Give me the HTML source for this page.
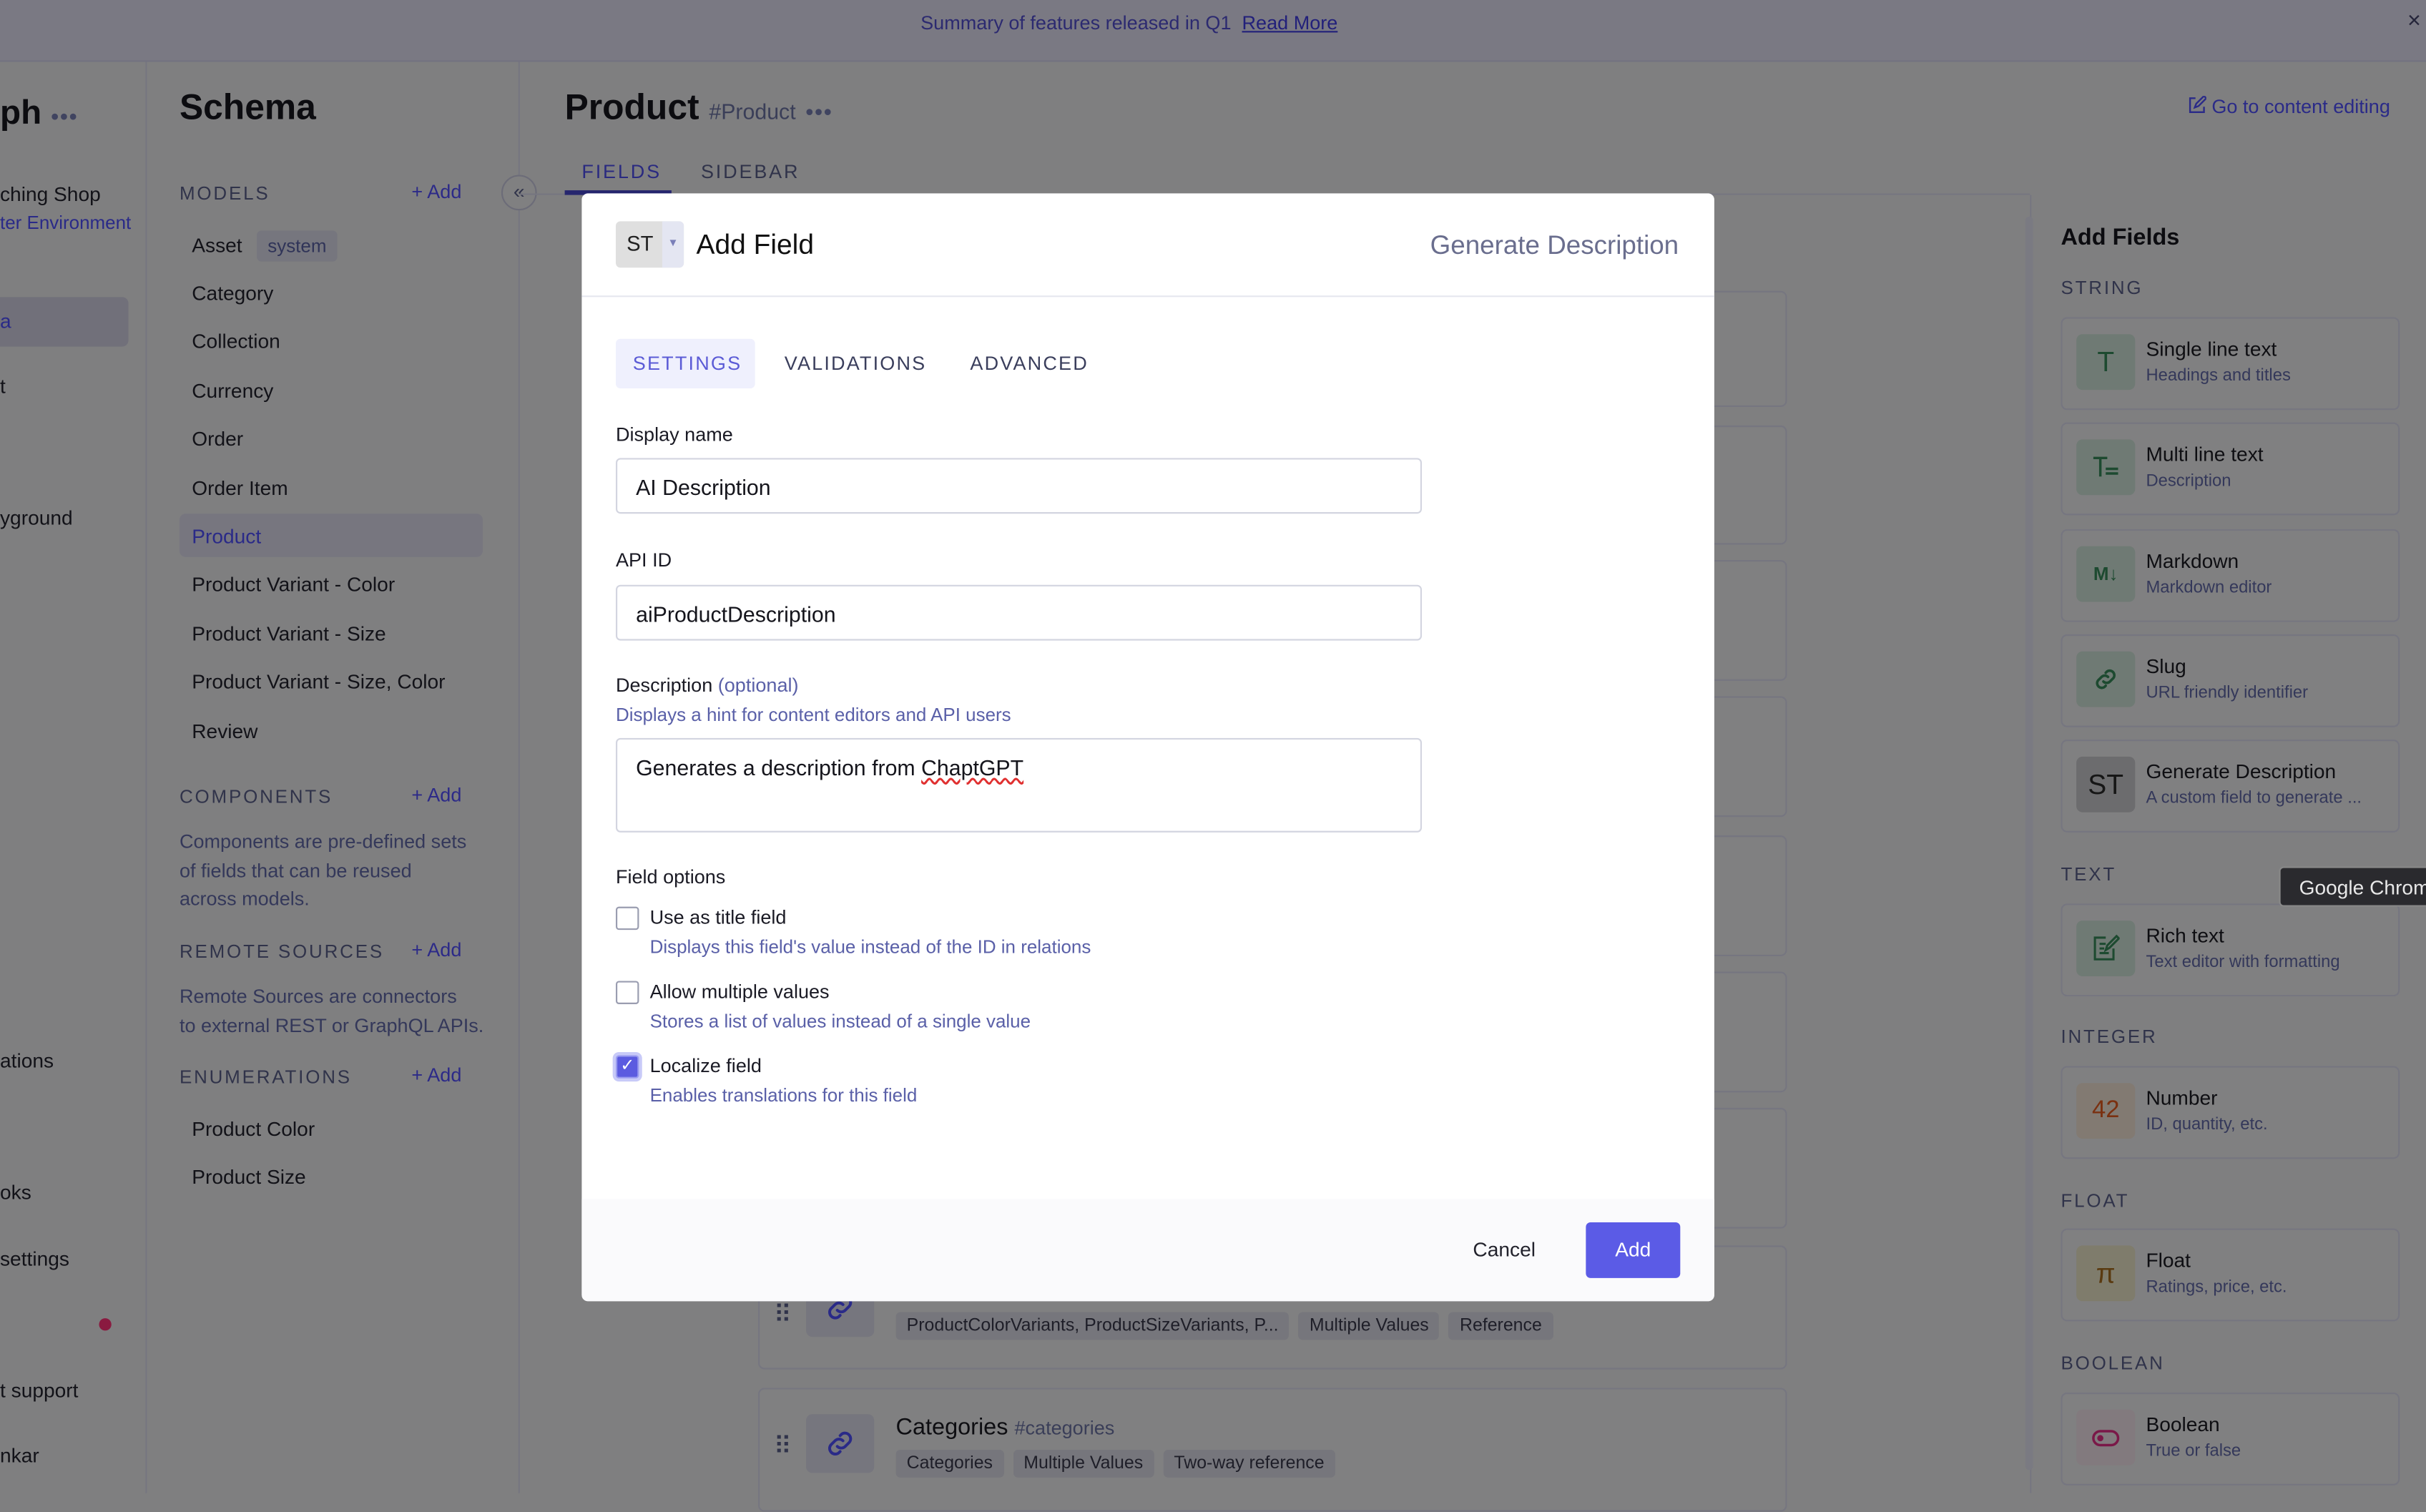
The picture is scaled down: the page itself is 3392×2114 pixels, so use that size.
<!DOCTYPE html>
<html><head><meta charset="utf-8"><style>
*{box-sizing:border-box;margin:0;padding:0}
html,body{width:3392px;height:2088px;overflow:hidden;background:#7f7f80}
#r{position:absolute;left:0;top:0;width:1568px;height:965px;transform:scale(2.16327);transform-origin:0 0;font-family:"Liberation Sans",sans-serif;color:#111;background:#7f7f80}
.a{position:absolute;white-space:nowrap}
.cap{font-size:12px;letter-spacing:1.3px;color:#30334a}
.addl{color:#2c2a88;font-size:12.5px}
.it{font-size:13px;color:#121218}
.card{position:absolute;left:1332px;width:219px;height:60px;border:1px solid #767680;border-radius:4px;background:#808081}
.ic{position:absolute;left:9px;top:10px;width:38px;height:36px;border-radius:4px;background:#6f7a74;color:#1d4a30;font-size:18px;text-align:center;line-height:36px}
.ic svg{position:absolute;left:10px;top:9px}
.ct{position:absolute;left:54px;top:12px;font-size:13px;color:#0e0e12}
.cs{position:absolute;left:54px;top:31px;font-size:11px;color:#34385a}
.bgc{position:absolute;left:490px;width:665px;border:1px solid #767680;border-radius:4px;background:#808081}
.chip{display:inline-block;background:#76767c;border-radius:3px;padding:3px 7px;font-size:11.5px;color:#1e1e28;margin-right:6px}
.lbl{font-size:12.5px;color:#1a1a24}
.inp{position:absolute;left:398px;width:521px;height:36px;border:1px solid #d3d5e0;border-radius:3px;font-size:14px;padding:10px 12px;color:#15151c}
.hint{font-size:12px;color:#5a60a8}
.cb{position:absolute;left:398px;width:15px;height:15px;border:1.5px solid #9a9db0;border-radius:2px;background:#fff}
</style></head><body><div id="r">
<div class="a" style="left:0;top:0;width:1568px;height:40px;background:#7a7983;border-bottom:1px solid #737280"></div>
<div class="a" style="left:595px;top:8px;font-size:12.5px;color:#2c2a70">Summary of features released in Q1 &nbsp;<span style="text-decoration:underline;color:#22207a">Read More</span></div>
<div class="a" style="left:1556px;top:5px;font-size:15px;color:#25253a">×</div>
<div class="a" style="left:94px;top:40px;width:1px;height:925px;background:#767680"></div>
<div class="a" style="left:0;top:60px;font-size:22px;font-weight:bold;color:#0c0c10">ph <span style="font-size:14px;color:#404460;letter-spacing:1px">•••</span></div>
<div class="a it" style="left:0;top:118px">ching Shop</div>
<div class="a" style="left:0;top:137px;font-size:12px;color:#2a2a88">ter Environment</div>
<div class="a" style="left:0;top:192px;width:83px;height:32px;background:#71707a;border-radius:0 4px 4px 0"></div>
<div class="a" style="left:0;top:200px;font-size:13px;color:#2a2a88">a</div>
<div class="a it" style="left:0;top:242px">t</div>
<div class="a it" style="left:0;top:327px">yground</div>
<div class="a it" style="left:0;top:678px">ations</div>
<div class="a it" style="left:0;top:763px">oks</div>
<div class="a it" style="left:0;top:806px">settings</div>
<div class="a" style="left:64px;top:852px;width:8px;height:8px;border-radius:50%;background:#8a1a40"></div>
<div class="a it" style="left:0;top:891px">t support</div>
<div class="a it" style="left:0;top:933px">nkar</div>
<div class="a" style="left:335px;top:40px;width:1px;height:925px;background:#767680"></div>
<div class="a" style="left:116px;top:56px;font-size:23px;font-weight:bold;color:#0c0c10">Schema</div>
<div class="a cap" style="left:116px;top:118px">MODELS</div>
<div class="a addl" style="left:266px;top:117px">+ Add</div>
<div class="a" style="left:324px;top:113px;width:23px;height:23px;border:1px solid #6c6c78;border-radius:50%;background:#808081;text-align:center;line-height:20px;font-size:13px;color:#30334a">«</div>
<div class="a it" style="left:124px;top:151px">Asset</div>
<div class="a" style="left:166px;top:149px;background:#76767e;border-radius:3px;padding:3px 7px;font-size:12px;color:#303458">system</div>
<div class="a it" style="left:124px;top:182px">Category</div>
<div class="a it" style="left:124px;top:213px">Collection</div>
<div class="a it" style="left:124px;top:245px">Currency</div>
<div class="a it" style="left:124px;top:276px">Order</div>
<div class="a it" style="left:124px;top:308px">Order Item</div>
<div class="a" style="left:116px;top:332px;width:196px;height:28px;background:#77767f;border-radius:4px"></div>
<div class="a" style="left:124px;top:339px;font-size:13px;color:#2a2a88">Product</div>
<div class="a it" style="left:124px;top:370px">Product Variant - Color</div>
<div class="a it" style="left:124px;top:402px">Product Variant - Size</div>
<div class="a it" style="left:124px;top:433px">Product Variant - Size, Color</div>
<div class="a it" style="left:124px;top:465px">Review</div>
<div class="a cap" style="left:116px;top:508px">COMPONENTS</div>
<div class="a addl" style="left:266px;top:507px">+ Add</div>
<div class="a" style="left:116px;top:535px;font-size:12.5px;line-height:18.5px;color:#34385a">Components are pre-defined sets<br>of fields that can be reused<br>across models.</div>
<div class="a cap" style="left:116px;top:608px">REMOTE SOURCES</div>
<div class="a addl" style="left:266px;top:607px">+ Add</div>
<div class="a" style="left:116px;top:635px;font-size:12.5px;line-height:18.5px;color:#34385a">Remote Sources are connectors<br>to external REST or GraphQL APIs.</div>
<div class="a cap" style="left:116px;top:689px">ENUMERATIONS</div>
<div class="a addl" style="left:266px;top:688px">+ Add</div>
<div class="a it" style="left:124px;top:722px">Product Color</div>
<div class="a it" style="left:124px;top:753px">Product Size</div>
<div class="a" style="left:365px;top:56px;font-size:23px;font-weight:bold;color:#0c0c10">Product <span style="font-size:14px;font-weight:normal;color:#3a3e58">#Product</span> <span style="font-size:14px;color:#404460;letter-spacing:1px">•••</span></div>
<div class="a" style="left:1414px;top:62px;font-size:12.5px;color:#2a2a88"><svg width="12" height="12" viewBox="0 0 12 12" style="vertical-align:-1px"><path d="M5 1.5H1.5v9h9V7M4.5 7.5l1-2.5 5-5 1.5 1.5-5 5z" fill="none" stroke="#2a2a88" stroke-width="1.1"/></svg> Go to content editing</div>
<div class="a" style="left:376px;top:104px;font-size:12.5px;letter-spacing:1.3px;color:#2a2a80">FIELDS</div>
<div class="a" style="left:453px;top:104px;font-size:12.5px;letter-spacing:1.3px;color:#30334a">SIDEBAR</div>
<div class="a" style="left:336px;top:125px;width:976px;height:1px;background:#767680"></div>
<div class="a" style="left:365px;top:123px;width:69px;height:3px;background:#26266e"></div>
<div class="bgc" style="top:188px;height:75px"></div>
<div class="bgc" style="top:275px;height:77px"></div>
<div class="bgc" style="top:362px;height:78px"></div>
<div class="bgc" style="top:450px;height:78px"></div>
<div class="bgc" style="top:540px;height:78px"></div>
<div class="bgc" style="top:628px;height:78px"></div>
<div class="bgc" style="top:716px;height:78px"></div>
<div class="bgc" style="top:805px;height:80px"></div>
<div class="a" style="left:500px;top:840px;font-size:16px;color:#30334a">⠿</div>
<div class="a" style="left:521px;top:826px;width:44px;height:38px;border-radius:4px;background:#76767e"><svg width="22" height="22" viewBox="0 0 24 24" style="position:absolute;left:11px;top:8px"><path d="M10 14a4 4 0 0 0 5.6 0l3-3a4 4 0 0 0-5.6-5.6l-1 1M14 10a4 4 0 0 0-5.6 0l-3 3a4 4 0 0 0 5.6 5.6l1-1" fill="none" stroke="#2a2a88" stroke-width="2" stroke-linecap="round"/></svg></div>
<div class="a" style="left:579px;top:847px"><span class="chip">ProductColorVariants, ProductSizeVariants, P...</span><span class="chip">Multiple Values</span><span class="chip">Reference</span></div>
<div class="bgc" style="top:897px;height:80px"></div>
<div class="a" style="left:500px;top:925px;font-size:16px;color:#30334a">⠿</div>
<div class="a" style="left:521px;top:914px;width:44px;height:38px;border-radius:4px;background:#76767e"><svg width="22" height="22" viewBox="0 0 24 24" style="position:absolute;left:11px;top:8px"><path d="M10 14a4 4 0 0 0 5.6 0l3-3a4 4 0 0 0-5.6-5.6l-1 1M14 10a4 4 0 0 0-5.6 0l-3 3a4 4 0 0 0 5.6 5.6l1-1" fill="none" stroke="#2a2a88" stroke-width="2" stroke-linecap="round"/></svg></div>
<div class="a" style="left:579px;top:914px;font-size:15px;color:#0e0e12">Categories <span style="font-size:12.5px;color:#3a3e58">#categories</span></div>
<div class="a" style="left:579px;top:936px"><span class="chip">Categories</span><span class="chip">Multiple Values</span><span class="chip">Two-way reference</span></div>
<div class="a" style="left:1312px;top:126px;width:1px;height:839px;background:#767680"></div>
<div class="a" style="left:1309px;top:140px;width:5px;height:810px;background:#7a7a82;border-radius:3px"></div>
<div class="a" style="left:1332px;top:145px;font-size:15px;font-weight:bold;color:#0c0c10">Add Fields</div>
<div class="a cap" style="left:1332px;top:179px">STRING</div>
<div class="card" style="top:205px"><div class="ic">T</div><div class="ct">Single line text</div><div class="cs">Headings and titles</div></div>
<div class="card" style="top:273px"><div class="ic"><svg width="18" height="18" viewBox="0 0 18 18"><path d="M1 3h9M5.5 3v12M9 10h8M9 13h8" stroke="#1d4a30" stroke-width="1.6" fill="none"/></svg></div><div class="ct">Multi line text</div><div class="cs">Description</div></div>
<div class="card" style="top:342px"><div class="ic" style="font-size:12px;font-weight:bold">M↓</div><div class="ct">Markdown</div><div class="cs">Markdown editor</div></div>
<div class="card" style="top:410px"><div class="ic"><svg width="18" height="18" viewBox="0 0 24 24"><path d="M10 14a4 4 0 0 0 5.6 0l3-3a4 4 0 0 0-5.6-5.6l-1 1M14 10a4 4 0 0 0-5.6 0l-3 3a4 4 0 0 0 5.6 5.6l1-1" fill="none" stroke="#1d4a30" stroke-width="2.2" stroke-linecap="round"/></svg></div><div class="ct">Slug</div><div class="cs">URL friendly identifier</div></div>
<div class="card" style="top:478px"><div class="ic" style="background:#6c6c6e;color:#161616">ST</div><div class="ct">Generate Description</div><div class="cs">A custom field to generate ...</div></div>
<div class="a cap" style="left:1332px;top:558px">TEXT</div>
<div class="card" style="top:584px"><div class="ic"><svg width="18" height="18" viewBox="0 0 18 18"><path d="M14 9v7H2V2h7M5 6h4M5 9h3M5 12h6M9 10l1-3 6-6 1.5 1.5-6 6z" fill="none" stroke="#1d4a30" stroke-width="1.4"/></svg></div><div class="ct">Rich text</div><div class="cs">Text editor with formatting</div></div>
<div class="a cap" style="left:1332px;top:663px">INTEGER</div>
<div class="card" style="top:689px"><div class="ic" style="background:#827a72;color:#7a3010;font-size:16px">42</div><div class="ct">Number</div><div class="cs">ID, quantity, etc.</div></div>
<div class="a cap" style="left:1332px;top:769px">FLOAT</div>
<div class="card" style="top:794px"><div class="ic" style="background:#7f7c6c;color:#5a3a10">π</div><div class="ct">Float</div><div class="cs">Ratings, price, etc.</div></div>
<div class="a cap" style="left:1332px;top:874px">BOOLEAN</div>
<div class="card" style="top:900px"><div class="ic" style="background:#827a7e"><svg width="18" height="18" viewBox="0 0 18 18"><rect x="1" y="5" width="16" height="9" rx="4.5" fill="none" stroke="#7a1848" stroke-width="1.6"/><circle cx="5.5" cy="9.5" r="2" fill="#7a1848"/></svg></div><div class="ct">Boolean</div><div class="cs">True or false</div></div>
<div class="a" style="left:1473px;top:560px;width:100px;height:26px;background:#2a2a2e;border:1px solid #888;border-radius:3px;color:#e8e8e8;font-size:13px;padding:5px 12px">Google Chrome</div>
<div class="a" style="left:376px;top:125px;width:732px;height:716px;background:#fff;border-radius:4px;overflow:hidden">
 <div class="a" style="left:0;top:66px;width:732px;height:1px;background:#e6e7ef"></div>
 <div class="a" style="left:22px;top:18px;width:44px;height:30px;border-radius:3px;background:#dfdfdf;overflow:hidden">
  <div class="a" style="left:7px;top:7px;font-size:13.5px;color:#222">ST</div>
  <div class="a" style="left:30px;top:0;width:14px;height:30px;background:#e4e6f2;color:#7a7fb8;font-size:7px;text-align:center;line-height:30px">▼</div>
 </div>
 <div class="a" style="left:74px;top:23px;font-size:18px;color:#111">Add Field</div>
 <div class="a" style="right:23px;top:24px;font-size:17px;color:#6a6e8e">Generate Description</div>
 <div class="a" style="left:22px;top:94px;width:90px;height:32px;background:#eff0fd;border-radius:3px"></div>
 <div class="a" style="left:33px;top:103px;font-size:12.5px;letter-spacing:1px;color:#5b5bd6">SETTINGS</div>
 <div class="a" style="left:131px;top:103px;font-size:12.5px;letter-spacing:1px;color:#3a3e5c">VALIDATIONS</div>
 <div class="a" style="left:251px;top:103px;font-size:12.5px;letter-spacing:1px;color:#3a3e5c">ADVANCED</div>
</div>
<div class="a lbl" style="left:398px;top:274px">Display name</div>
<div class="inp" style="top:296px">AI Description</div>
<div class="a lbl" style="left:398px;top:355px">API ID</div>
<div class="inp" style="top:378px">aiProductDescription</div>
<div class="a lbl" style="left:398px;top:436px">Description <span style="color:#5a60a8">(optional)</span></div>
<div class="a hint" style="left:398px;top:455px">Displays a hint for content editors and API users</div>
<div class="inp" style="top:477px;height:61px">Generates a description from <span style="text-decoration:underline wavy #e03030">ChaptGPT</span></div>
<div class="a lbl" style="left:398px;top:560px">Field options</div>
<div class="cb" style="top:586px"></div>
<div class="a" style="left:420px;top:586px;font-size:12.5px;color:#1a1a24">Use as title field</div>
<div class="a hint" style="left:420px;top:605px">Displays this field's value instead of the ID in relations</div>
<div class="cb" style="top:634px"></div>
<div class="a" style="left:420px;top:634px;font-size:12.5px;color:#1a1a24">Allow multiple values</div>
<div class="a hint" style="left:420px;top:653px">Stores a list of values instead of a single value</div>
<div class="cb" style="top:682px;background:#5b5be0;border-color:#9a9cf0;box-shadow:0 0 0 2px #c8caf8;color:#fff;font-size:11px;line-height:12px;text-align:center">✓</div>
<div class="a" style="left:420px;top:682px;font-size:12.5px;color:#1a1a24">Localize field</div>
<div class="a hint" style="left:420px;top:701px">Enables translations for this field</div>
<div class="a" style="left:376px;top:775px;width:732px;height:66px;background:#fafafc;border-radius:0 0 4px 4px"></div>
<div class="a" style="left:952px;top:800px;font-size:13px;color:#22222c">Cancel</div>
<div class="a" style="left:1025px;top:790px;width:61px;height:36px;background:#5b5be6;border-radius:3px;color:#fff;font-size:13px;text-align:center;line-height:36px">Add</div>
</div></body></html>
